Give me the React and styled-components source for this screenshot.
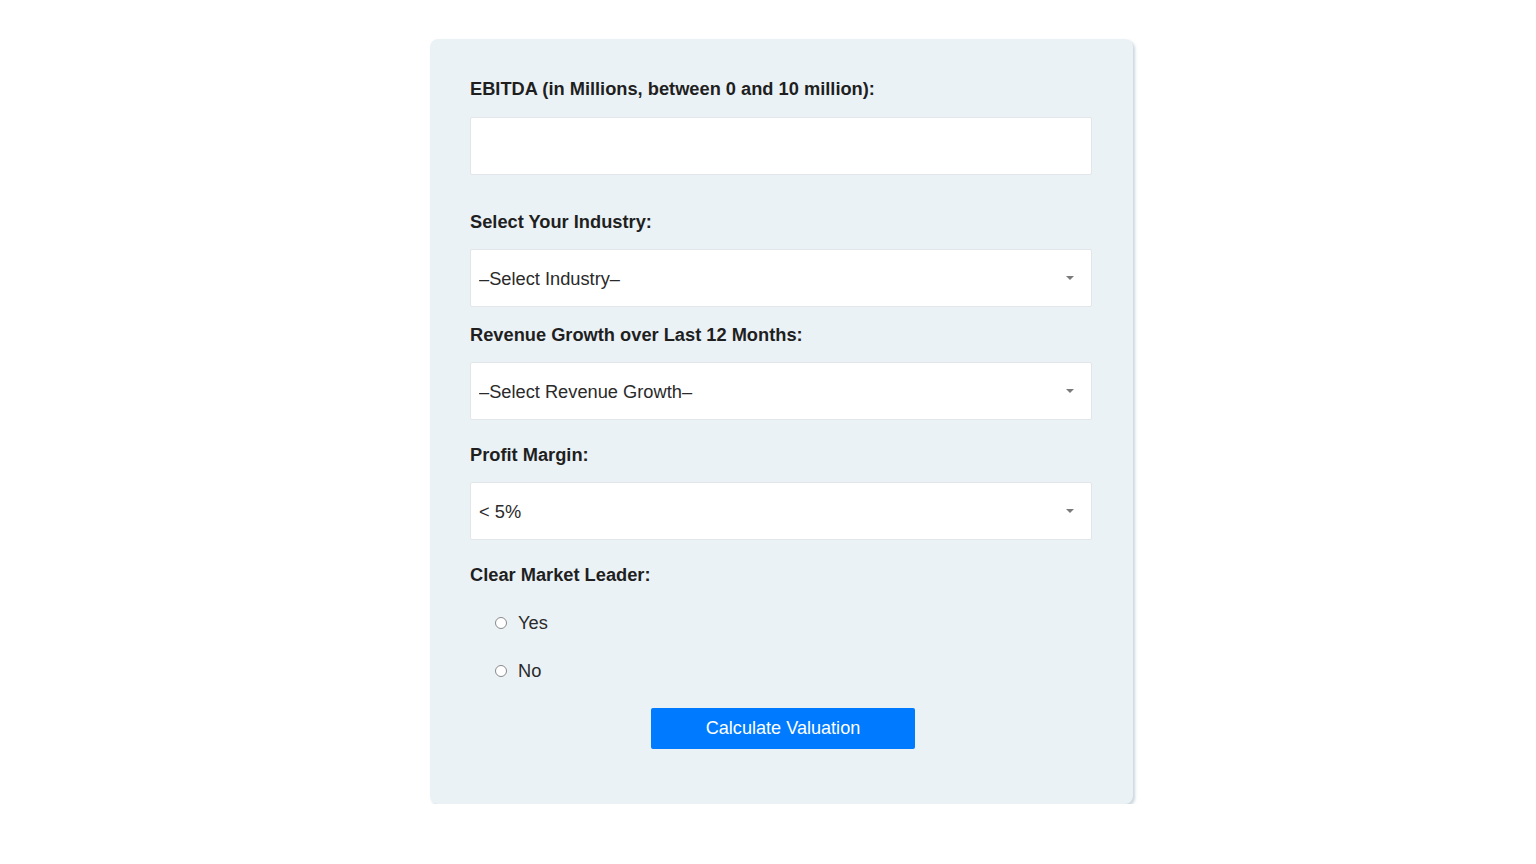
import React from "react";
import styled, { createGlobalStyle } from "styled-components";

const Global = createGlobalStyle`
  html, body { margin: 0; padding: 0; background: #ffffff; }
  body { font-family: "Liberation Sans", Arial, sans-serif; color: #222; }
`;

const Page = styled.div`
  display: flex;
  justify-content: center;
  padding-top: 39px;
  padding-left: 27px;
`;

const Card = styled.form`
  width: 703px;
  box-sizing: border-box;
  background: #ebf2f6;
  border-radius: 8px;
  padding: 39px 41px 55px 40px;
  box-shadow: 2px 2px 3px rgba(160, 180, 195, 0.55);
  display: flex;
  flex-direction: column;
`;

const Label = styled.label`
  display: block;
  font-size: 18.25px;
  font-weight: bold;
  line-height: 21px;
  color: #1f1f1f;
  margin-top: ${(p) => p.$top || 0}px;
  margin-bottom: ${(p) => (p.$bottom !== undefined ? p.$bottom : 17)}px;
`;

const TextInput = styled.input`
  display: block;
  width: 100%;
  height: 58px;
  box-sizing: border-box;
  border: 1px solid #e3e6e8;
  border-radius: 2px;
  background: #fff;
  font-family: inherit;
  font-size: 18px;
  padding: 0 8px;
  outline: none;
`;

const SelectWrap = styled.div`
  position: relative;
  height: 58px;
`;

const Select = styled.select`
  appearance: none;
  -webkit-appearance: none;
  width: 100%;
  height: 58px;
  box-sizing: border-box;
  border: 1px solid #e3e6e8;
  border-radius: 2px;
  background: #fff;
  font-family: "Liberation Sans", Arial, sans-serif;
  font-size: 18.25px;
  color: #2a2a2a;
  padding: 0 8px;
  outline: none;
`;

const Caret = styled.svg`
  position: absolute;
  right: 18px;
  top: 27px;
  width: 8px;
  height: 4px;
  pointer-events: none;
`;

const RadioRow = styled.label`
  display: flex;
  align-items: center;
  gap: 11px;
  padding-left: 25px;
  font-size: 18.25px;
  color: #2a2a2a;
  height: 24px;
  margin-top: ${(p) => p.$top || 0}px;
`;

const Radio = styled.input`
  appearance: none;
  -webkit-appearance: none;
  width: 12px;
  height: 12px;
  margin: 0;
  border: 1px solid #8a8a8a;
  border-radius: 50%;
  background: #fff;
  box-sizing: border-box;
`;

const Button = styled.button`
  align-self: center;
  margin-top: ${(p) => p.$top || 0}px;
  margin-left: 4px;
  width: 264px;
  height: 41px;
  background: #007bff;
  color: #fff;
  border: none;
  border-radius: 2px;
  font-family: "Liberation Sans", Arial, sans-serif;
  font-size: 18.1px;
  cursor: pointer;
`;

function Dropdown({ value }) {
  return (
    <SelectWrap>
      <Select defaultValue={value}>
        <option>{value}</option>
      </Select>
      <Caret viewBox="0 0 8 4">
        <path d="M0 0 L8 0 L4 4 Z" fill="#7a7a7a" />
      </Caret>
    </SelectWrap>
  );
}

export default function App() {
  return (
    <>
      <Global />
      <Page>
        <Card onSubmit={(e) => e.preventDefault()}>
          <Label $bottom={18}>EBITDA (in Millions, between 0 and 10 million):</Label>
          <TextInput type="text" />
          <Label $top={36}>Select Your Industry:</Label>
          <Dropdown value="–Select Industry–" />
          <Label $top={17}>Revenue Growth over Last 12 Months:</Label>
          <Dropdown value="–Select Revenue Growth–" />
          <Label $top={24}>Profit Margin:</Label>
          <Dropdown value="< 5%" />
          <Label $top={24} $bottom={18}>Clear Market Leader:</Label>
          <RadioRow $top={8}>
            <Radio type="radio" name="leader" />
            Yes
          </RadioRow>
          <RadioRow $top={24}>
            <Radio type="radio" name="leader" />
            No
          </RadioRow>
          <Button $top={25} type="submit">Calculate Valuation</Button>
        </Card>
      </Page>
    </>
  );
}
